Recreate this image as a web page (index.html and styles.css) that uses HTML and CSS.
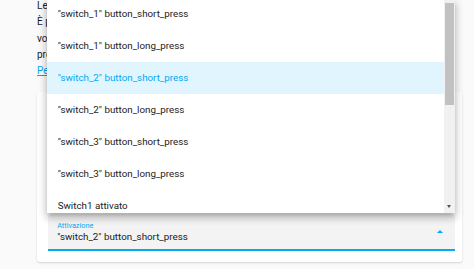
FILE: index.html
```html
<!DOCTYPE html>
<html lang="it">
<head>
<meta charset="utf-8">
<link rel="stylesheet" href="styles.css">
</head>
<body>
<div class="page">
  <p class="intro">
    Le automazioni vengono avviate dai trigger.<br>
    È possibile specificare più trigger per la stessa regola.<br>
    volta avviato un trigger, Home Assistant convaliderà le<br>
    presenti, e chiamerà l'azione.<br>
    <a href="#" class="link">Per saperne di più sui trigger</a>
  </p>
  <div class="card">
    <div class="field">
      <span class="field-label">Attivazione</span>
      <span class="field-value">"switch_2" button_short_press</span>
      <span class="field-arrow"></span>
    </div>
  </div>
  <div class="menu">
    <ul class="menu-list">
      <li class="item">"switch_1" button_short_press</li>
      <li class="item">"switch_1" button_long_press</li>
      <li class="item selected">"switch_2" button_short_press</li>
      <li class="item">"switch_2" button_long_press</li>
      <li class="item">"switch_3" button_short_press</li>
      <li class="item">"switch_3" button_long_press</li>
      <li class="item">Switch1 attivato</li>
    </ul>
    <div class="scrollbar">
      <div class="thumb"></div>
      <span class="down-arrow"></span>
    </div>
  </div>
</div>
</body>
</html>
```

FILE: styles.css
```css
html, body {
  margin: 0;
  padding: 0;
  background: #fafafa;
  font-family: Roboto, "Liberation Sans", sans-serif;
}

.page {
  position: relative;
  width: 474px;
  height: 269px;
  overflow: hidden;
  padding: 0 12px 0 37px;
  box-sizing: border-box;
}

.intro {
  margin: -2px 0 0;
  font-size: 10px;
  line-height: 16.3px;
  color: #212121;
  white-space: nowrap;
  height: 94px;
}

.link {
  color: #03a9f4;
  text-decoration: underline;
}

.card {
  background: #fff;
  border-radius: 3px;
  box-shadow: 0 1px 2px rgba(0,0,0,0.10), 0 1px 3px rgba(0,0,0,0.06);
  height: 170px;
  padding: 0 7px 11px 10.67px;
  box-sizing: border-box;
  display: flex;
  flex-direction: column;
  justify-content: flex-end;
}

.field {
  position: relative;
  height: 37.3px;
  background: #f3f3f3;
  border-radius: 3px 3px 0 0;
  border-bottom: 2px solid #03a9f4;
  box-sizing: border-box;
  padding: 7px 9.5px 0;
  display: flex;
  flex-direction: column;
}

.field-label {
  font-size: 7.3px;
  line-height: 9px;
  color: #03a9f4;
}

.field-value {
  font-size: 9.8px;
  line-height: 14px;
  color: #212121;
}

.field-arrow {
  position: absolute;
  right: 12px;
  top: 16px;
  width: 0;
  height: 0;
  border-left: 3.5px solid transparent;
  border-right: 3.5px solid transparent;
  border-bottom: 3.5px solid #03a9f4;
}

.menu {
  position: absolute;
  left: 47px;
  top: 0;
  width: 408px;
  height: 213px;
  background: #fff;
  display: flex;
  box-shadow: 0 3px 4px -2px rgba(0,0,0,0.2), 0 5px 7px 1px rgba(0,0,0,0.14), 0 2px 9px 1px rgba(0,0,0,0.12);
  overflow: hidden;
}

.menu-list {
  list-style: none;
  margin: -2px 0 0;
  padding: 0;
  flex: 1;
}

.item {
  height: 32px;
  line-height: 32px;
  padding-left: 10.67px;
  font-size: 9.8px;
  color: #212121;
  white-space: nowrap;
}

.item.selected {
  background: #e1f5fe;
  color: #03a9f4;
}

.scrollbar {
  position: relative;
  width: 11px;
  background: #f1f1f1;
}

.thumb {
  position: absolute;
  left: 1px;
  right: 1px;
  top: 3px;
  height: 102px;
  background: #c1c1c1;
}

.down-arrow {
  position: absolute;
  left: 3px;
  bottom: 5px;
  width: 0;
  height: 0;
  border-left: 2.5px solid transparent;
  border-right: 2.5px solid transparent;
  border-top: 3px solid #505050;
}
```
